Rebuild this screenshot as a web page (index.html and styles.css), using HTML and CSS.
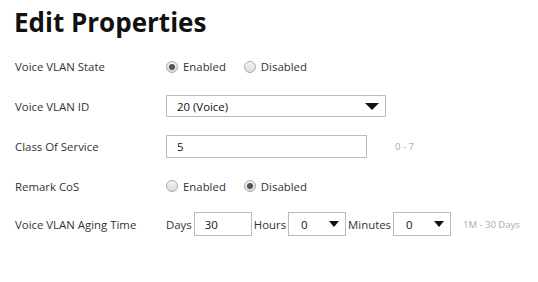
FILE: index.html
```html
<!DOCTYPE html>
<html lang="en">
<head>
  <meta charset="UTF-8" />
  <title>Edit Properties</title>
  <link rel="stylesheet" href="styles.css">
</head>
<body>
  <div class="painel">
    <h1>Edit Properties</h1>

    <div class="form">
      <div class="linha">
        <div class="rotulo">Voice VLAN State</div>
        <div class="campo">
          <label class="radio"><span class="bola marcada"></span>Enabled</label>
          <label class="radio"><span class="bola"></span>Disabled</label>
        </div>
      </div>

      <div class="linha">
        <div class="rotulo">Voice VLAN ID</div>
        <div class="campo">
          <div class="select largo"><span>20 (Voice)</span><span class="seta"></span></div>
        </div>
      </div>

      <div class="linha">
        <div class="rotulo">Class Of Service</div>
        <div class="campo">
          <div class="input medio">5</div>
          <span class="dica">0 - 7</span>
        </div>
      </div>

      <div class="linha">
        <div class="rotulo">Remark CoS</div>
        <div class="campo">
          <label class="radio"><span class="bola"></span>Enabled</label>
          <label class="radio"><span class="bola marcada"></span>Disabled</label>
        </div>
      </div>

      <div class="linha ultima">
        <div class="rotulo">Voice VLAN Aging Time</div>
        <div class="campo tempo">
          <span>Days</span>
          <div class="input curto">30</div>
          <span>Hours</span>
          <div class="select curto"><span>0</span><span class="seta"></span></div>
          <span>Minutes</span>
          <div class="select curto"><span>0</span><span class="seta"></span></div>
          <span class="dica">1M - 30 Days</span>
        </div>
      </div>
    </div>
  </div>
</body>
</html>
```

FILE: styles.css
```css
body {
  margin: 0;
  font-family: "Open Sans", Arial, sans-serif;
  font-size: 11.4px;
  color: #333;
  background: #fff;
}

.painel {
  padding: 3px 15px 0 15px;
}

h1 {
  font-size: 26px;
  font-weight: bold;
  color: #111;
  margin: 0 0 0 -1px;
  line-height: 38px;
}

.form {
  margin-top: 6px;
}

.linha {
  display: flex;
  align-items: center;
  height: 40px;
  white-space: nowrap;
}

.linha:first-child {
  height: 39px;
}

.linha.ultima {
  margin-top: -2px;
}

.rotulo {
  width: 151px;
  flex-shrink: 0;
}

.campo {
  display: flex;
  align-items: center;
  gap: 18px;
}

.campo.tempo {
  gap: 2px;
}

.radio {
  display: flex;
  align-items: center;
  gap: 5px;
}

.bola {
  width: 10px;
  height: 10px;
  border: 1px solid #aaa;
  border-radius: 50%;
  background: linear-gradient(#f4f4f4, #dcdcdc);
  position: relative;
}

.bola.marcada::after {
  content: "";
  position: absolute;
  left: 2px;
  top: 2px;
  width: 6px;
  height: 6px;
  border-radius: 50%;
  background: #555;
}

.input,
.select {
  box-sizing: border-box;
  border: 1px solid #bbb;
  background: #fff;
  color: #111;
  display: flex;
  align-items: center;
  padding: 0 6px 0 10px;
  flex-shrink: 0;
}

.select {
  justify-content: space-between;
}

.largo {
  width: 220px;
  height: 22px;
}

.medio {
  width: 201px;
  height: 23px;
}

.curto {
  width: 58px;
  height: 24px;
}

.select.curto {
  padding-left: 12px;
}

.seta {
  width: 0;
  height: 0;
  border-left: 7px solid transparent;
  border-right: 7px solid transparent;
  border-top: 7px solid #111;
}

.select.curto .seta {
  border-left-width: 5px;
  border-right-width: 5px;
  border-top-width: 6px;
}

.dica {
  font-size: 9.5px;
  color: #aaa;
  margin-left: 10px;
}
```
